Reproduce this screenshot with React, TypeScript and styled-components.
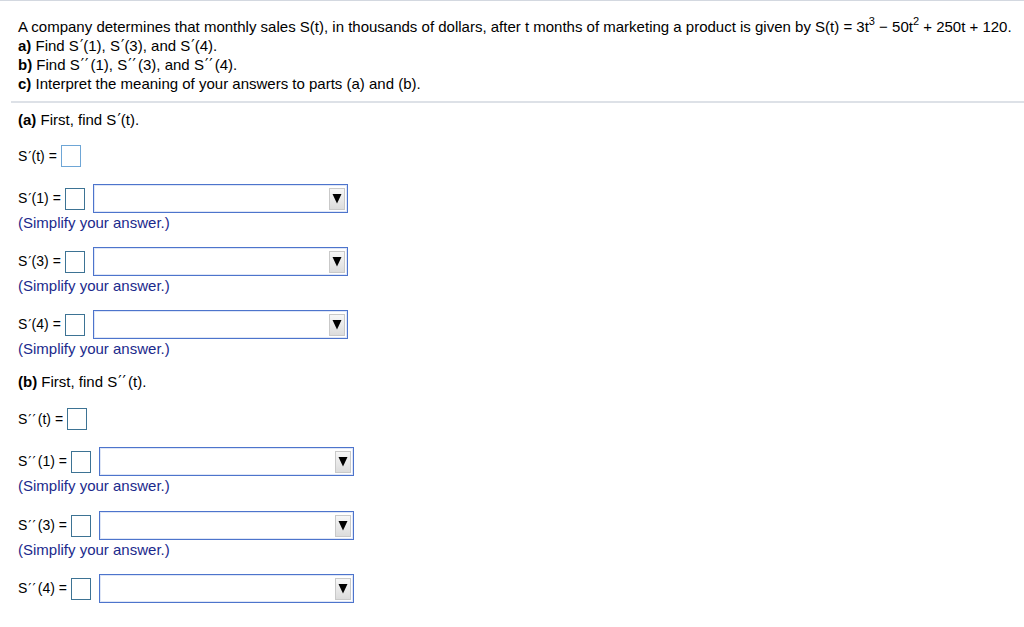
import React from "react"
import styled, { createGlobalStyle } from "styled-components"

const GlobalStyle = createGlobalStyle`
    html, body {
        margin: 0;
        padding: 0;
        background: #ffffff;
    }
    body {
        font-family: "Liberation Sans", Arial, sans-serif;
        font-size: 15px;
        color: #000000;
    }
`

const StyledPage = styled.div`
    width: 1024px;
    border-top: 1px solid #d3d8e0;
`

const StyledProblem = styled.div`
    margin-left: 11px;
    padding: 16px 0 8px 7px;
    border-bottom: 2px solid #dde1e7;
    line-height: 19px;
`

const StyledLine = styled.div`
    white-space: nowrap;
    height: 19px;
`

const StyledSup = styled.sup`
    font-size: 11px;
    line-height: 0;
    vertical-align: baseline;
    position: relative;
    top: -7px;
`

const StyledPrime = styled.span<{ $double?: boolean }>`
    font-family: "DejaVu Sans", sans-serif;
    font-size: 1em;
    line-height: 0;
    margin: 0 1px 0 1px;
    letter-spacing: ${props => props.$double ? '1px' : '-1px'};
`

const StyledSolution = styled.div`
    padding: 7px 0 0 18px;
    display: flex;
    flex-direction: column;
    align-items: flex-start;
    line-height: 19px;
`

const StyledPrompt = styled.div<{ $gap: number }>`
    margin-top: ${props => props.$gap}px;
    height: 19px;
`

const StyledRow = styled.div<{ $gap: number }>`
    display: flex;
    align-items: center;
    margin-top: ${props => props.$gap}px;
`

const StyledLabel = styled.span`
    white-space: nowrap;
    font-size: 14px;
    line-height: 19px;
`

const StyledEquals = styled.span`
    margin-left: 4px;
`

const StyledAnswerBox = styled.span<{ $active?: boolean }>`
    display: inline-block;
    width: 18px;
    height: 20px;
    margin-left: 4px;
    border: 1px solid ${props => props.$active ? '#6ea6d6' : '#3d7394'};
    background: #ffffff;
`

const StyledDropdown = styled.div`
    box-sizing: border-box;
    width: 255px;
    height: 29px;
    margin-left: 8px;
    border: 1px solid #4d74cc;
    box-shadow: inset 0 0 0 1px #dfe6f6;
    background: #ffffff;
    display: flex;
    align-items: center;
    justify-content: flex-end;
    padding-right: 2px;
`

const StyledArrowButton = styled.span`
    box-sizing: border-box;
    width: 16px;
    height: 22px;
    border: 1px solid #c9c9c9;
    background: linear-gradient(#f7f7f7, #dcdcdc);
    display: flex;
    align-items: center;
    justify-content: center;
`

const StyledHint = styled.div`
    color: #1b2a8c;
    height: 19px;
`

function ArrowIcon() {
    return (
        <svg width="10" height="11" viewBox="0 0 10 11">
            <path d="M0.5 1 L9.5 1 L5 10.5 Z" fill="#000000" />
        </svg>
    )
}

function Primed({ count }: { count: number }) {
    return (
        <>
            S<StyledPrime $double={count === 2}>{count === 1 ? "\u2032" : "\u2032\u2032"}</StyledPrime>
        </>
    )
}

function EquationLabel({ count, arg }: { count: number; arg: string }) {
    return (
        <StyledLabel>
            <Primed count={count} />({arg})<StyledEquals>=</StyledEquals>
        </StyledLabel>
    )
}

function AnswerRow({ count, arg, gap }: { count: number; arg: string; gap: number }) {
    return (
        <StyledRow $gap={gap}>
            <EquationLabel count={count} arg={arg} />
            <StyledAnswerBox />
            <StyledDropdown>
                <StyledArrowButton>
                    <ArrowIcon />
                </StyledArrowButton>
            </StyledDropdown>
        </StyledRow>
    )
}

export default function App() {
    return (
        <StyledPage>
            <GlobalStyle />
            <StyledProblem>
                <StyledLine>
                    A company determines that monthly sales S(t), in thousands of dollars, after t months of marketing a product is given by S(t) = 3t<StyledSup>3</StyledSup> − 50t<StyledSup>2</StyledSup> + 250t + 120.
                </StyledLine>
                <StyledLine><b>a)</b> Find <Primed count={1} />(1), <Primed count={1} />(3), and <Primed count={1} />(4).</StyledLine>
                <StyledLine><b>b)</b> Find <Primed count={2} />(1), <Primed count={2} />(3), and <Primed count={2} />(4).</StyledLine>
                <StyledLine><b>c)</b> Interpret the meaning of your answers to parts (a) and (b).</StyledLine>
            </StyledProblem>

            <StyledSolution>
                <StyledPrompt $gap={0}><b>(a)</b> First, find <Primed count={1} />(t).</StyledPrompt>
                <StyledRow $gap={16}>
                    <EquationLabel count={1} arg="t" />
                    <StyledAnswerBox $active />
                </StyledRow>

                <AnswerRow count={1} arg="1" gap={17} />
                <StyledHint>(Simplify your answer.)</StyledHint>
                <AnswerRow count={1} arg="3" gap={15} />
                <StyledHint>(Simplify your answer.)</StyledHint>
                <AnswerRow count={1} arg="4" gap={15} />
                <StyledHint>(Simplify your answer.)</StyledHint>

                <StyledPrompt $gap={14}><b>(b)</b> First, find <Primed count={2} />(t).</StyledPrompt>
                <StyledRow $gap={17}>
                    <EquationLabel count={2} arg="t" />
                    <StyledAnswerBox />
                </StyledRow>

                <AnswerRow count={2} arg="1" gap={17} />
                <StyledHint>(Simplify your answer.)</StyledHint>
                <AnswerRow count={2} arg="3" gap={16} />
                <StyledHint>(Simplify your answer.)</StyledHint>
                <AnswerRow count={2} arg="4" gap={15} />
            </StyledSolution>
        </StyledPage>
    )
}
